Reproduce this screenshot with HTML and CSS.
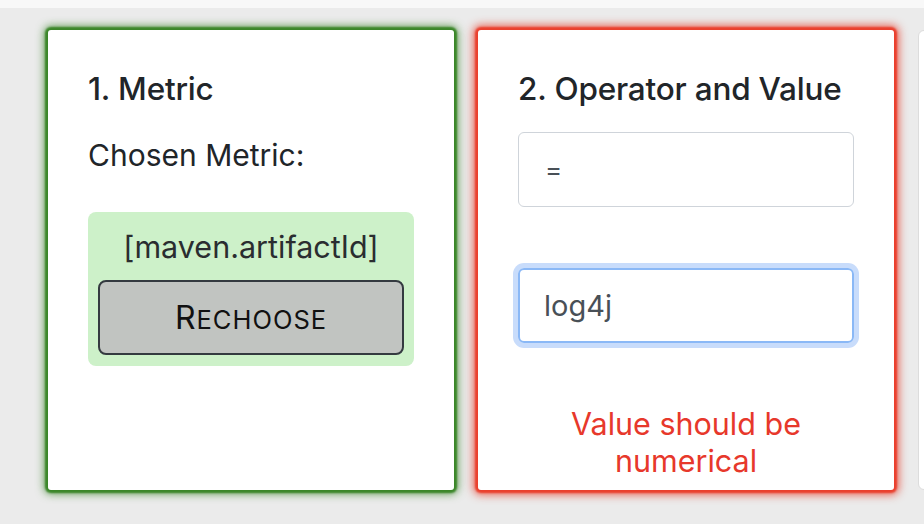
FILE: index.html
```html
<!DOCTYPE html>
<html>
<head>
<meta charset="utf-8">
<link rel="stylesheet" href="styles.css">
</head>
<body>
<div class="topbar"></div>
<div class="row">
  <section class="card card-ok">
    <h2 class="title">1. Metric</h2>
    <p class="label">Chosen Metric:</p>
    <div class="chosen">
      <div class="chosen-name">[maven.artifactId]</div>
      <button class="rechoose"><span class="cap">R</span><span class="sc">echoose</span></button>
    </div>
  </section>
  <section class="card card-err">
    <h2 class="title">2. Operator and Value</h2>
    <div class="select">=</div>
    <div class="input">log4j</div>
    <p class="error">Value should be<br>numerical</p>
  </section>
  <section class="card card-next"></section>
</div>
</body>
</html>
```

FILE: styles.css
```css
html, body {
  margin: 0;
  padding: 0;
}
body {
  background: #ebebeb;
  font-family: Inter, "Noto Sans", sans-serif;
  color: #212529;
  width: 924px;
  height: 524px;
  overflow: hidden;
}
.topbar {
  height: 8px;
  background: #f8f8f8;
}
.row {
  display: flex;
  gap: 24px;
  padding: 22px 0 0 48px;
  align-items: flex-start;
  overflow: hidden;
  height: 502px;
  box-sizing: border-box;
}
.card {
  flex: none;
  background: #fff;
  border-radius: 3px;
  height: 460px;
  box-sizing: border-box;
  padding: 0 40px;
}
.card-ok {
  width: 406px;
  box-shadow: 0 0 2px 3px #3a8628, 0 0 8px 4px rgba(59, 132, 41, 0.75);
}
.card-err {
  width: 416px;
  box-shadow: 0 0 2px 3px #ea3f2d, 0 0 9px 5px rgba(232, 64, 47, 0.75);
}
.card-next {
  width: 40px;
  border: 1px solid #dcdcdc;
  border-radius: 6px;
}
.title {
  margin: 0;
  padding-top: 40px;
  font-size: 31.5px;
  font-weight: 500;
  line-height: 38px;
  letter-spacing: -0.2px;
}
.label {
  margin: 28px 0 0;
  font-size: 30px;
  line-height: 38px;
  font-weight: 400;
}
.chosen {
  margin-top: 38px;
  background: #cdf1c9;
  border-radius: 8px;
  padding: 15px 10px 11px;
  text-align: center;
}
.chosen-name {
  font-size: 30.5px;
  line-height: 40px;
  color: #2a2d30;
}
.rechoose {
  display: block;
  width: 100%;
  margin-top: 13px;
  height: 75px;
  background: #c1c4c1;
  border: 2px solid #343a40;
  border-radius: 8px;
  font-family: inherit;
  color: #111;
  padding: 0;
  letter-spacing: 1px;
}
.cap {
  font-size: 32px;
}
.sc {
  font-size: 25.5px;
  text-transform: uppercase;
}
.select {
  margin-top: 24px;
  height: 75px;
  box-sizing: border-box;
  border: 1px solid #cfd4da;
  border-radius: 6px;
  padding-left: 26px;
  display: flex;
  align-items: center;
  font-size: 26px;
  color: #495057;
}
.input {
  margin-top: 61px;
  height: 75px;
  box-sizing: border-box;
  border: 2px solid #8ab8f6;
  border-radius: 6px;
  box-shadow: 0 0 0 5px #c8dcfb;
  padding-left: 24px;
  display: flex;
  align-items: center;
  font-size: 29px;
  color: #495057;
}
.error {
  margin: 62px 0 0;
  text-align: center;
  color: #e7382b;
  font-size: 30.5px;
  line-height: 37px;
}
```
